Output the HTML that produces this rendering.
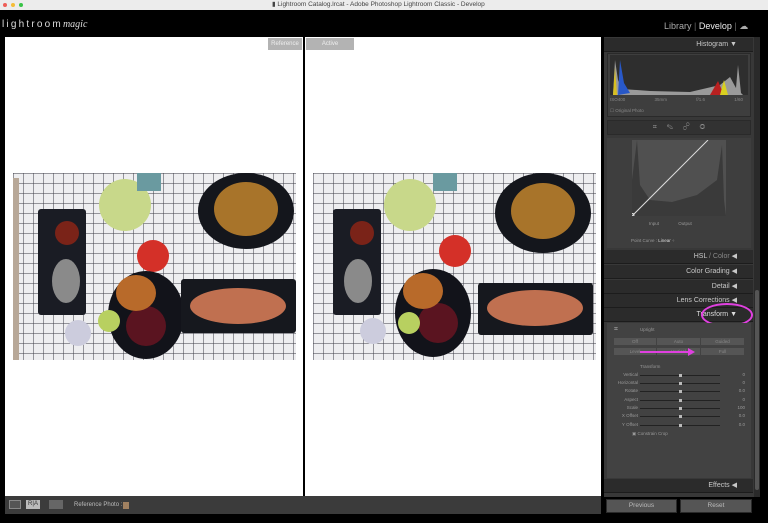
<!DOCTYPE html>
<html><head><meta charset="utf-8"><style>
*{margin:0;padding:0;box-sizing:border-box}
body{width:768px;height:523px;background:#000;position:relative;overflow:hidden;font-family:"Liberation Sans",sans-serif}
.a{position:absolute}
.t{color:#c8c8c8;font-size:7px;text-align:right;padding-right:16px;line-height:14px}
.hdr{background:#2b2b2b;border-bottom:1px solid #1c1c1c;height:14px;left:604px;width:149px}
.lb{font-size:4.5px;color:#9a9a9a;text-align:right;width:34px;left:604px}
.sl{height:1px;background:#222;left:640px;width:80px}
.kn{width:3px;height:3px;background:#bbb;left:679px}
.vv{font-size:4.5px;color:#9a9a9a;left:735px;width:10px;text-align:right}
.btn{background:#555;height:7px;font-size:4.5px;color:#888;text-align:center;line-height:7px}
</style></head><body>
<div class="a" style="left:0;top:0;width:768px;height:10px;background:#ececec"></div>
<div class="a" style="left:3px;top:3px;width:4px;height:4px;border-radius:50%;background:#ee5e57"></div>
<div class="a" style="left:11px;top:3px;width:4px;height:4px;border-radius:50%;background:#f5bd38"></div>
<div class="a" style="left:19px;top:3px;width:4px;height:4px;border-radius:50%;background:#38c347"></div>
<div class="a" style="left:272px;top:0;width:240px;font-size:6.5px;line-height:10px;color:#444">▮ Lightroom Catalog.lrcat - Adobe Photoshop Lightroom Classic - Develop</div>
<div class="a" style="left:2px;top:19px;font-size:10px;color:#ddd;letter-spacing:2.2px">lightroom<span style="font-family:'Liberation Serif',serif;font-style:italic;letter-spacing:0">magic</span></div>
<div class="a" style="left:664px;top:21px;font-size:9px;color:#aaa">Library <span style="color:#666">|</span> <span style="color:#eee">Develop</span> <span style="color:#666">|</span> ☁</div>
<div class="a" style="left:5px;top:37px;width:298px;height:459px;background:#fff"></div>
<div class="a" style="left:305px;top:37px;width:296px;height:459px;background:#fff"></div>
<div class="a" style="left:268px;top:38px;width:34px;height:12px;background:#b3b3b3;color:#eee;font-size:6px;text-align:center;line-height:12px">Reference</div>
<div class="a" style="left:306px;top:38px;width:48px;height:12px;background:#b3b3b3;color:#eee;font-size:6px;text-align:center;line-height:12px">Active</div>
<svg class="a" style="left:13px;top:173px" width="283" height="187" viewBox="0 0 283 187">
<defs><pattern id="g" width="10" height="10" patternUnits="userSpaceOnUse"><rect width="10" height="10" fill="#eeeef0"/><path d="M0 0H10M0 0V10" stroke="#3a3a44" stroke-width="1"/></pattern></defs>
<rect width="283" height="187" fill="url(#g)"/><rect x="0" y="5" width="6" height="182" fill="#b8a898"/>
<rect x="25" y="36" width="48" height="106" rx="3" fill="#1a1c24"/>
<circle cx="112" cy="32" r="26" fill="#c8d88a"/><circle cx="54" cy="60" r="12" fill="#7a2318"/>
<rect x="124" y="0" width="24" height="18" fill="#6a9aa0"/>
<circle cx="140" cy="83" r="16" fill="#d43028"/>
<ellipse cx="233" cy="38" rx="48" ry="38" fill="#14161c"/><ellipse cx="233" cy="36" rx="32" ry="27" fill="#a8742a"/>
<ellipse cx="133" cy="142" rx="38" ry="44" fill="#12131a"/><circle cx="133" cy="153" r="20" fill="#5a1420"/><ellipse cx="123" cy="120" rx="20" ry="18" fill="#b86a2a"/>
<circle cx="96" cy="148" r="11" fill="#b8d060"/>
<rect x="168" y="106" width="115" height="54" rx="3" fill="#16181e"/><ellipse cx="225" cy="133" rx="48" ry="18" fill="#c07050"/>
<ellipse cx="53" cy="108" rx="14" ry="22" fill="#8a8a8a"/><circle cx="65" cy="160" r="13" fill="#ccd"/>
</svg>
<svg class="a" style="left:313px;top:173px" width="283" height="187" viewBox="0 0 283 187">
<rect width="283" height="187" fill="url(#g)"/>
<rect x="20" y="36" width="48" height="106" rx="3" fill="#1a1c24"/>
<circle cx="97" cy="32" r="26" fill="#c8d88a"/><circle cx="49" cy="60" r="12" fill="#7a2318"/>
<rect x="120" y="0" width="24" height="18" fill="#6a9aa0"/>
<circle cx="142" cy="78" r="16" fill="#d43028"/>
<ellipse cx="230" cy="40" rx="48" ry="40" fill="#14161c"/><ellipse cx="230" cy="38" rx="32" ry="28" fill="#a8742a"/>
<ellipse cx="120" cy="140" rx="38" ry="44" fill="#12131a"/><circle cx="125" cy="150" r="20" fill="#5a1420"/><ellipse cx="110" cy="118" rx="20" ry="18" fill="#b86a2a"/>
<circle cx="96" cy="150" r="11" fill="#b8d060"/>
<rect x="165" y="110" width="115" height="52" rx="3" fill="#16181e"/><ellipse cx="222" cy="135" rx="48" ry="18" fill="#c07050"/>
<ellipse cx="45" cy="108" rx="14" ry="22" fill="#8a8a8a"/><circle cx="60" cy="158" r="13" fill="#ccd"/>
</svg>
<div class="a" style="left:5px;top:496px;width:596px;height:18px;background:#3b3b3b"></div>
<div class="a" style="left:9px;top:500px;width:12px;height:9px;border:1px solid #888;background:#555"></div>
<div class="a" style="left:26px;top:500px;width:14px;height:9px;background:#bbb;font-size:6px;line-height:9px;text-align:center;color:#333">R|A</div>
<div class="a" style="left:49px;top:500px;width:14px;height:9px;background:#666"></div>
<div class="a" style="left:74px;top:500px;font-size:6px;color:#bbb;line-height:10px">Reference Photo :</div>
<div class="a" style="left:123px;top:502px;width:6px;height:7px;background:#a08060"></div>
<div class="a" style="left:604px;top:37px;width:150px;height:460px;background:#383838"></div>
<div class="a" style="left:754px;top:37px;width:6px;height:460px;background:#2a2a2a"></div>
<div class="a" style="left:755px;top:290px;width:4px;height:200px;background:#555;border-radius:2px"></div>
<div class="a hdr t" style="top:38px">Histogram ▼</div>
<div class="a" style="left:607px;top:53px;width:144px;height:64px;background:#3e3e3e;border:1px solid #2a2a2a"></div>
<svg class="a" style="left:610px;top:55px" width="138" height="40" viewBox="0 0 138 40">
<rect width="138" height="40" fill="#2e2e2e"/>
<path d="M3 40L5 5 8 25 12 34 40 36 80 37 110 30 120 22 126 33 128 10 131 38 133 40Z" fill="#9a9a9a"/>
<path d="M3 40L5 12 7 40Z" fill="#d8c020"/><path d="M8 40L10 5 14 28 20 38 8 40Z" fill="#2858c8"/>
<path d="M100 40L108 26 114 40Z" fill="#b82020"/><path d="M110 40L114 25 118 40Z" fill="#d8d020"/>
</svg>
<div class="a" style="left:610px;top:97px;width:138px;font-size:4.5px;color:#888;word-spacing:28px">ISO400 35mm f/1.6 1/60</div>
<div class="a" style="left:610px;top:108px;font-size:4.5px;color:#888">☐ Original Photo</div>
<div class="a" style="left:607px;top:120px;width:144px;height:15px;background:#323232;border:1px solid #2a2a2a;font-size:7px;color:#999;text-align:center;line-height:14px;word-spacing:8px">⌗ ✎ ☍ ◎</div>
<div class="a" style="left:607px;top:138px;width:144px;height:110px;background:#3e3e3e"></div>
<svg class="a" style="left:632px;top:140px" width="94" height="76" viewBox="0 0 94 76">
<rect width="94" height="76" fill="#505050"/>
<path d="M0 76L0 40 5 0 8 45 18 60 40 62 65 55 85 40 90 5 92 60 94 76Z" fill="#3a3a3a"/>
<path d="M0 76L76 0" stroke="#ddd" stroke-width="1"/><circle cx="0.5" cy="75" r="1.5" fill="none" stroke="#ddd"/>
</svg>
<div class="a" style="left:649px;top:221px;font-size:4.5px;color:#999;word-spacing:18px">Input Output</div>
<div class="a" style="left:631px;top:238px;font-size:4.5px;color:#999">Point Curve : <span style="color:#ddd">Linear</span> ÷</div>
<div class="a hdr t" style="top:250px;font-size:7px">HSL <span style="color:#888">/ Color</span> ◀</div>
<div class="a hdr t" style="top:265px">Color Grading ◀</div>
<div class="a hdr t" style="top:280px">Detail ◀</div>
<div class="a hdr t" style="top:294px">Lens Corrections ◀</div>
<div class="a hdr t" style="top:308px;color:#ddd">Transform ▼</div>
<div class="a" style="left:701px;top:303px;width:52px;height:24px;border:2px solid #e040e0;border-radius:50%"></div>
<div class="a" style="left:607px;top:323px;width:144px;height:155px;background:#424242"></div>
<div class="a" style="left:614px;top:326px;font-size:7px;color:#aaa">⌗</div>
<div class="a" style="left:640px;top:327px;font-size:4.5px;color:#999">Upright</div>
<div class="a btn" style="left:614px;top:338px;width:42px">Off</div>
<div class="a btn" style="left:657px;top:338px;width:43px">Auto</div>
<div class="a btn" style="left:701px;top:338px;width:43px">Guided</div>
<div class="a btn" style="left:614px;top:348px;width:42px">Level</div>
<div class="a btn" style="left:657px;top:348px;width:43px">Vertical</div>
<div class="a btn" style="left:701px;top:348px;width:43px">Full</div>
<div class="a" style="left:640px;top:351px;width:50px;height:2px;background:#e040e0"></div>
<div class="a" style="left:688px;top:348px;width:0;height:0;border-left:7px solid #e040e0;border-top:4px solid transparent;border-bottom:4px solid transparent"></div>
<div class="a" style="left:640px;top:364px;font-size:4.5px;color:#999">Transform</div>
<div class="a lb" style="top:372px">Vertical</div><div class="a sl" style="top:375px"></div><div class="a kn" style="top:374px"></div><div class="a vv" style="top:372px">0</div>
<div class="a lb" style="top:380px">Horizontal</div><div class="a sl" style="top:383px"></div><div class="a kn" style="top:382px"></div><div class="a vv" style="top:380px">0</div>
<div class="a lb" style="top:388px">Rotate</div><div class="a sl" style="top:391px"></div><div class="a kn" style="top:390px"></div><div class="a vv" style="top:388px">0.0</div>
<div class="a lb" style="top:397px">Aspect</div><div class="a sl" style="top:400px"></div><div class="a kn" style="top:399px"></div><div class="a vv" style="top:397px">0</div>
<div class="a lb" style="top:405px">Scale</div><div class="a sl" style="top:408px"></div><div class="a kn" style="top:407px"></div><div class="a vv" style="top:405px">100</div>
<div class="a lb" style="top:413px">X Offset</div><div class="a sl" style="top:416px"></div><div class="a kn" style="top:415px"></div><div class="a vv" style="top:413px">0.0</div>
<div class="a lb" style="top:422px">Y Offset</div><div class="a sl" style="top:425px"></div><div class="a kn" style="top:424px"></div><div class="a vv" style="top:422px">0.0</div>
<div class="a" style="left:632px;top:431px;font-size:4.5px;color:#999">▣ Constrain Crop</div>
<div class="a hdr t" style="top:479px">Effects ◀</div>
<div class="a" style="left:606px;top:499px;width:71px;height:14px;background:#555;border:1px solid #2a2a2a;font-size:6.5px;color:#bbb;text-align:center;line-height:12px">Previous</div>
<div class="a" style="left:680px;top:499px;width:72px;height:14px;background:#555;border:1px solid #2a2a2a;font-size:6.5px;color:#bbb;text-align:center;line-height:12px">Reset</div>
</body></html>
